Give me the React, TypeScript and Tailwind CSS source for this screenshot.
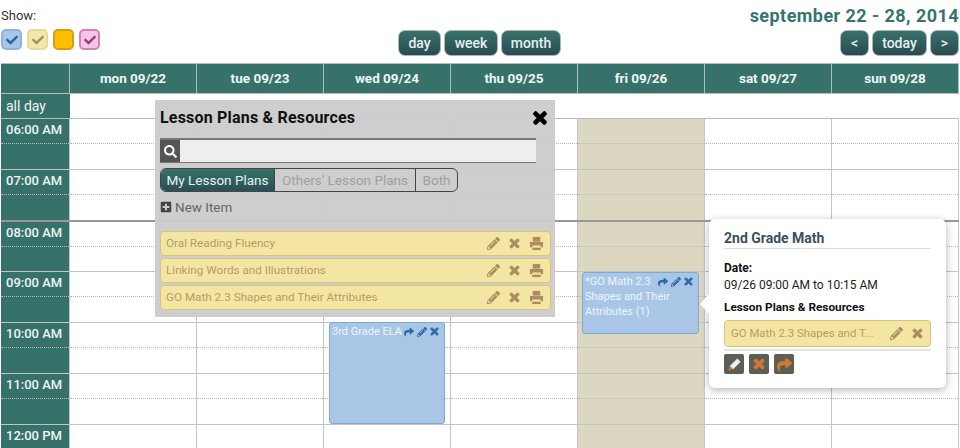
import { FaCheck, FaPencilAlt, FaPlusSquare, FaSearch, FaShare, FaTimes } from "react-icons/fa"

const days = ["mon 09/22", "tue 09/23", "wed 09/24", "thu 09/25", "fri 09/26", "sat 09/27", "sun 09/28"]
const hours = ["06:00 AM", "07:00 AM", "08:00 AM", "09:00 AM", "10:00 AM", "11:00 AM", "12:00 PM"]
const lessons = ["Oral Reading Fluency", "Linking Words and Illustrations", "GO Math 2.3 Shapes and Their Attributes"]

function Btn({ label, className }: { label: string; className: string }) {
  return (
    <button className={`h-[26px] rounded-[7px] border border-[#aab5b5] bg-gradient-to-b from-[#377269] to-[#2a4a52] text-[14px] font-medium text-[#e4f0ee] ${className}`}>
      {label}
    </button>
  )
}

function Check({ box, tick }: { box: string; tick: string }) {
  return (
    <span className={`flex h-[21px] w-[21px] items-center justify-center rounded-[5px] border-2 ${box} ${tick}`}>
      <FaCheck className="h-[12px] w-[12px]" />
    </span>
  )
}

function BoldX({ className }: { className: string }) {
  return <FaTimes className={className} stroke="currentColor" strokeWidth={40} />
}

function PrintIcon() {
  return (
    <svg viewBox="0 0 16 16" className="h-[15px] w-[15px]" fill="currentColor">
      <path d="M4 1h8v5H4Z" />
      <path d="M1 6.5h14V12h-2.5v-2h-9v2H1Z" />
      <path d="M3.5 12.5h9V15h-9Z" />
    </svg>
  )
}

function EventIcons() {
  return (
    <span className="flex items-center gap-[2px] text-[#2a6aa5]">
      <FaShare className="h-[10px] w-[12px]" />
      <FaPencilAlt className="h-[10px] w-[10px]" />
      <BoldX className="h-[11px] w-[11px]" />
    </span>
  )
}

export default function App() {
  return (
    <div className="relative h-[448px] w-[960px] overflow-hidden bg-white font-['Roboto',sans-serif] text-[#222]">
      {/* toolbar */}
      <div className="flex h-[63px] items-start">
        <div className="w-[398px] pt-[8px] pl-[1px]">
          <div className="text-[13px] leading-[15px] text-[#333]">Show:</div>
          <div className="mt-[6px] flex gap-[5px]">
            <Check box="border-[#8fb4dc] bg-[#a9c6e7]" tick="text-[#1f66a8]" />
            <Check box="border-[#e8d99b] bg-[#f3e7a8]" tick="text-[#b08a68]" />
            <span className="h-[21px] w-[21px] rounded-[5px] border-2 border-[#d69e08] bg-[#ffbe00]" />
            <Check box="border-[#d77fb7] bg-[#f6c6e6]" tick="text-[#a03a85]" />
          </div>
        </div>
        <div className="flex gap-[3px] pt-[30px]">
          <Btn label="day" className="w-[43px]" />
          <Btn label="week" className="w-[54px]" />
          <Btn label="month" className="w-[60px]" />
        </div>
        <div className="ml-auto flex flex-col items-end pr-[1px]">
          <div className="pt-[5px] text-[18px] leading-[21px] font-bold tracking-[0.45px] text-[#35756d]">september 22 - 28, 2014</div>
          <div className="mt-[4px] flex gap-[3px]">
            <Btn label="<" className="w-[29px]" />
            <Btn label="today" className="w-[55px]" />
            <Btn label=">" className="w-[29px]" />
          </div>
        </div>
      </div>

      {/* calendar */}
      <div className="ml-[1px] w-[958px] border-t border-[#bbb]">
        <div className="grid h-[29px] grid-cols-[69px_repeat(7,127px)] bg-[#36726a]">
          <div className="border-r border-[#a9bdb9]" />
          {days.map((d) => (
            <div key={d} className="flex items-center justify-center border-r border-[#a9bdb9] text-[13.5px] font-bold text-[#eef5f3]">{d}</div>
          ))}
        </div>
        <div className="grid h-[26px] grid-cols-[69px_889px] border-t border-b border-[#bbb]">
          <div className="bg-[#36726a] pl-[5px] text-[14px] leading-[24px] text-[#eef5f3]">all day</div>
          <div />
        </div>
        {hours.map((h, i) => (
          <div
            key={h}
            className={`grid grid-cols-[69px_repeat(7,127px)] ${i === 1 ? "h-[52px] border-b-2 border-[#999]" : i === 2 ? "h-[50px] border-b border-[#c4c4c4]" : "h-[51px] border-b border-[#c4c4c4]"}`}
          >
            <div className="border-r border-[#c4c4c4] bg-[#36726a]">
              <div className="h-[25px] border-b border-dotted border-[#bbb] pl-[5px] text-[13px] leading-[22px] font-medium text-[#eef5f3]">{h}</div>
            </div>
            {days.map((d, j) => (
              <div key={d} className={`border-r border-[#c4c4c4] ${j === 4 ? "bg-[#dbd7c0]" : ""}`}>
                <div className="h-[25px] border-b border-dotted border-[#bbb]" />
              </div>
            ))}
          </div>
        ))}
      </div>

      {/* events */}
      <div className="absolute top-[322px] left-[329px] h-[102px] w-[116px] rounded-[3px] border border-[#7ea9d2] bg-[#a9c6e7] px-[2px] py-[1px]">
        <div className="flex items-center justify-between pr-[2px] text-[11px] leading-[15px] text-[#eef5fb]">
          <span>3rd Grade ELA</span>
          <EventIcons />
        </div>
      </div>
      <div className="absolute top-[272px] left-[582px] h-[62px] w-[117px] rounded-[3px] border border-[#7ea9d2] bg-[#a9c6e7] px-[2px] py-[1px] text-[11px] leading-[15px] text-[#eef5fb]">
        <div className="flex items-center justify-between pr-[2px]">
          <span>*GO Math 2.3</span>
          <EventIcons />
        </div>
        <div>Shapes and Their</div>
        <div>Attributes (1)</div>
      </div>

      {/* lesson plans panel */}
      <div className="absolute top-[100px] left-[155px] h-[217px] w-[400px] bg-[#cbcbcb]/95 px-[5px]">
        <div className="flex items-center justify-between pt-[9px] pr-[6px]">
          <h2 className="text-[16px] leading-[18px] font-bold tracking-[0.2px] text-[#111]">Lesson Plans & Resources</h2>
          <BoldX className="mr-[-5px] h-[18px] w-[18px] text-black" />
        </div>
        <div className="mt-[11px] flex h-[25px] w-[376px] border-t-2 border-b border-[#777] bg-[#eee]">
          <span className="flex w-[20px] items-center justify-center bg-[#555] text-white">
            <FaSearch className="h-[13px] w-[13px]" />
          </span>
        </div>
        <div className="mt-[5px] flex h-[24px] w-[298px] overflow-hidden rounded-[6px] border border-[#444] text-[13.5px] leading-[22px]">
          <div className="w-[114px] border-r border-[#444] bg-gradient-to-b from-[#377269] to-[#2a4f55] text-center text-[#e8f2f0]">My Lesson Plans</div>
          <div className="w-[141px] border-r border-[#444] text-center text-[#a0a0a0]">Others' Lesson Plans</div>
          <div className="flex-1 text-center text-[#a0a0a0]">Both</div>
        </div>
        <div className="mt-[7px] flex items-center gap-[3px] text-[13.5px] leading-[16px] text-[#666]">
          <FaPlusSquare className="h-[12px] w-[12px] text-[#444]" />
          <span>New Item</span>
        </div>
        <div className="mt-[16px] flex w-[391px] flex-col gap-[2px]">
          {lessons.map((l) => (
            <div key={l} className="flex h-[25px] items-center justify-between rounded-[4px] border border-[#dcc378] bg-[#f3e6a2] pr-[6px] pl-[5px] text-[11.7px] text-[#b89a6a]">
              <span>{l}</span>
              <span className="flex items-center gap-[8px] text-[#ad8c62]">
                <FaPencilAlt className="h-[13px] w-[13px]" />
                <BoldX className="h-[13px] w-[13px]" />
                <PrintIcon />
              </span>
            </div>
          ))}
        </div>
      </div>

      {/* event popover */}
      <div className="absolute top-[219px] left-[709px] h-[169px] w-[237px] rounded-[6px] bg-white px-[15px] pt-[11px] shadow-[0_2px_8px_rgba(0,0,0,0.3)]">
        <span className="absolute top-[75px] left-[-9px] h-0 w-0 border-y-[10px] border-r-[9px] border-y-transparent border-r-white" />
        <div className="border-b border-[#ddd] pb-[1px] text-[14px] leading-[17px] font-bold text-[#3d4f5c]">2nd Grade Math</div>
        <div className="mt-[11px] text-[12px] leading-[16px] font-bold text-[#111]">Date:</div>
        <div className="mt-[1px] text-[12px] leading-[16px] text-[#222]">09/26 09:00 AM to 10:15 AM</div>
        <div className="mt-[6px] text-[11.8px] leading-[16px] font-bold text-[#111]">Lesson Plans & Resources</div>
        <div className="mt-[5px] flex h-[27px] items-center justify-between rounded-[4px] border border-[#dcc378] bg-[#f3e6a2] pr-[6px] pl-[6px] text-[11.4px] text-[#b89a6a]">
          <span>GO Math 2.3 Shapes and T...</span>
          <span className="flex items-center gap-[8px] text-[#ad8c62]">
            <FaPencilAlt className="h-[13px] w-[13px]" />
            <BoldX className="h-[13px] w-[13px]" />
          </span>
        </div>
        <div className="mt-[2px] flex gap-[5px] border-t-2 border-[#e4e4e4] pt-[3px]">
          <span className="flex h-[20px] w-[20px] items-center justify-center rounded-[2px] bg-[#5d5f55]">
            <svg viewBox="0 0 16 16" className="h-[15px] w-[15px]">
              <path d="M11 1.5 14.5 5 6.5 13 3 9.5Z" fill="#eee" />
              <path d="M3 9.5 6.5 13 1.5 14.5Z" fill="#cf7a30" />
            </svg>
          </span>
          <span className="flex h-[20px] w-[20px] items-center justify-center rounded-[2px] bg-[#5d5f55] text-[#cf7a30]">
            <BoldX className="h-[14px] w-[14px]" />
          </span>
          <span className="flex h-[20px] w-[20px] items-center justify-center rounded-[2px] bg-[#5d5f55] text-[#cf7a30]">
            <FaShare className="h-[15px] w-[15px]" />
          </span>
        </div>
      </div>
    </div>
  )
}
